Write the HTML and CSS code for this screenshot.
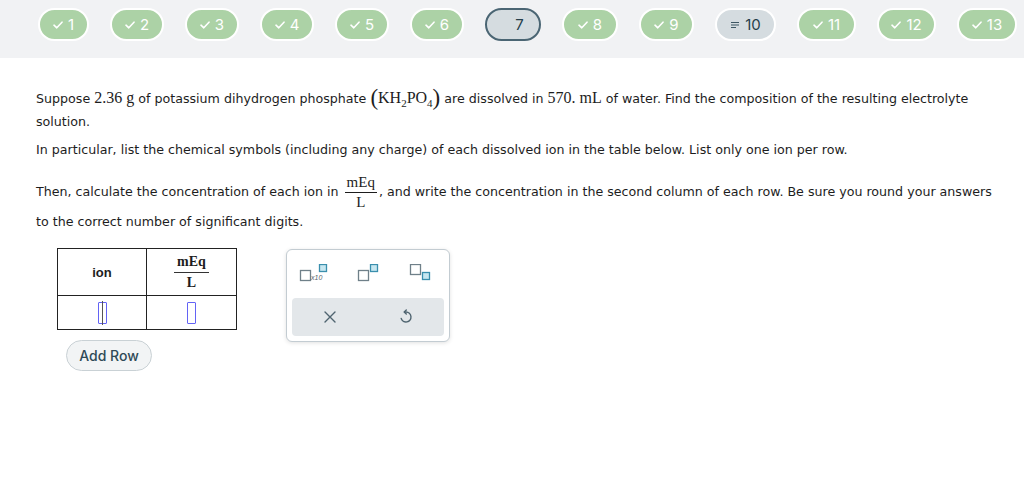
FILE: index.html
```html
<!DOCTYPE html>
<html lang="en">
<head>
<meta charset="utf-8">
<title>Question 7</title>
<link rel="stylesheet" href="styles.css">
</head>
<body>
<nav class="nav">
  <div class="pill done w1"><svg class="chk" viewBox="0 0 10 8"><path d="M1 4.2 L3.8 6.8 L9 1.2"/></svg><span>1</span></div>
  <div class="pill done w2"><svg class="chk" viewBox="0 0 10 8"><path d="M1 4.2 L3.8 6.8 L9 1.2"/></svg><span>2</span></div>
  <div class="pill done w2"><svg class="chk" viewBox="0 0 10 8"><path d="M1 4.2 L3.8 6.8 L9 1.2"/></svg><span>3</span></div>
  <div class="pill done w2"><svg class="chk" viewBox="0 0 10 8"><path d="M1 4.2 L3.8 6.8 L9 1.2"/></svg><span>4</span></div>
  <div class="pill done w2"><svg class="chk" viewBox="0 0 10 8"><path d="M1 4.2 L3.8 6.8 L9 1.2"/></svg><span>5</span></div>
  <div class="pill done w2"><svg class="chk" viewBox="0 0 10 8"><path d="M1 4.2 L3.8 6.8 L9 1.2"/></svg><span>6</span></div>
  <div class="pill current w7"><span class="ph"></span><span>7</span></div>
  <div class="pill done w8"><svg class="chk" viewBox="0 0 10 8"><path d="M1 4.2 L3.8 6.8 L9 1.2"/></svg><span>8</span></div>
  <div class="pill done w9"><svg class="chk" viewBox="0 0 10 8"><path d="M1 4.2 L3.8 6.8 L9 1.2"/></svg><span>9</span></div>
  <div class="pill partial w10"><svg class="lines" viewBox="0 0 10 8"><path d="M1 1.5 H9 M1 4 H9 M1 6.5 H6"/></svg><span>10</span></div>
  <div class="pill done w11"><svg class="chk" viewBox="0 0 10 8"><path d="M1 4.2 L3.8 6.8 L9 1.2"/></svg><span>11</span></div>
  <div class="pill done w12"><svg class="chk" viewBox="0 0 10 8"><path d="M1 4.2 L3.8 6.8 L9 1.2"/></svg><span>12</span></div>
  <div class="pill done w13"><svg class="chk" viewBox="0 0 10 8"><path d="M1 4.2 L3.8 6.8 L9 1.2"/></svg><span>13</span></div>
</nav>

<main class="content">
  <p class="q q1">Suppose <span class="m">2.36</span> <span class="m">g</span> of potassium dihydrogen phosphate <span class="m formula"><span class="paren">(</span>KH<sub>2</sub>PO<sub>4</sub><span class="paren">)</span></span> are dissolved in <span class="m">570.</span> <span class="m">mL</span> of water. Find the composition of the resulting electrolyte solution.</p>
  <p class="q q2">In particular, list the chemical symbols (including any charge) of each dissolved ion in the table below. List only one ion per row.</p>
  <p class="q q3">Then, calculate the concentration of each ion in <span class="frac"><span class="num">mEq</span><span class="den">L</span></span>, and write the concentration in the second column of each row. Be sure you round your answers to the correct number of significant digits.</p>

  <div class="work">
    <div class="left">
      <table class="ions">
        <tr class="head">
          <th class="c1">ion</th>
          <th class="c2"><span class="frac bold"><span class="num">mEq</span><span class="den">L</span></span></th>
        </tr>
        <tr class="row">
          <td><span class="box cursor"></span></td>
          <td><span class="box"></span></td>
        </tr>
      </table>
      <button class="addrow">Add Row</button>
    </div>

    <div class="palette">
      <div class="tools">
        <span class="tool">
          <svg width="30" height="20" viewBox="0 0 30 20">
            <rect x="1.5" y="6.5" width="10" height="10" class="big"/>
            <text x="12" y="16" class="x10">x10</text>
            <rect x="20.5" y="0.5" width="7" height="7" class="small"/>
          </svg>
        </span>
        <span class="tool">
          <svg width="26" height="20" viewBox="0 0 26 20">
            <rect x="2.5" y="6.5" width="10" height="10" class="big"/>
            <rect x="14.5" y="0.5" width="7" height="7" class="small"/>
          </svg>
        </span>
        <span class="tool">
          <svg width="26" height="20" viewBox="0 0 26 20">
            <rect x="2.5" y="0.5" width="10" height="10" class="big"/>
            <rect x="14.5" y="8.5" width="7" height="7" class="small"/>
          </svg>
        </span>
      </div>
      <div class="actions">
        <span class="act">
          <svg width="14" height="14" viewBox="0 0 14 14"><path d="M2 2 L12 12 M12 2 L2 12"/></svg>
        </span>
        <span class="act">
          <svg width="16" height="16" viewBox="0 0 16 16"><path d="M6.5 3 H8 A5 5 0 1 1 3.2 9.5"/><path d="M8.3 1 L6.2 3 L8.3 5"/></svg>
        </span>
      </div>
    </div>
  </div>
</main>
</body>
</html>
```

FILE: styles.css
```css
html, body {
  margin: 0;
  padding: 0;
  background: #ffffff;
}

body {
  font-family: "DejaVu Sans", Verdana, sans-serif;
  font-size: 12.65px;
  color: #1d1d1d;
}

/* ---------- top question navigation ---------- */
.nav {
  height: 58px;
  box-sizing: border-box;
  background: #f1f2f4;
  display: flex;
  align-items: flex-start;
  gap: 21px;
  padding: 8px 0 0 38px;
}

.pill {
  height: 33px;
  box-sizing: border-box;
  border: 2px solid #ffffff;
  border-radius: 17px;
  display: flex;
  align-items: center;
  justify-content: center;
  gap: 5px;
  font-family: Inter, "Open Sans", sans-serif;
  font-size: 15px;
  line-height: 1;
}

.w1 { width: 51px; }
.w2 { width: 54px; }
.w7 { width: 56px; }
.w8 { width: 56px; }
.w9 { width: 55px; }
.w10 { width: 61px; }
.w11 { width: 59px; }
.w12 { width: 59px; }
.w13 { width: 60px; }

.pill.done {
  background: #acd2a6;
  color: #ffffff;
}

.pill.current {
  background: #d5dce0;
  border-color: #4a6573;
  color: #263f4b;
}

.pill.partial {
  background: #d5dce0;
  color: #263f4b;
}

.chk {
  width: 10px;
  height: 8px;
  fill: none;
  stroke: #ffffff;
  stroke-width: 1.6;
  stroke-linecap: round;
  stroke-linejoin: round;
}

.lines {
  width: 10px;
  height: 8px;
  fill: none;
  stroke: #3d5663;
  stroke-width: 1.2;
}

.ph {
  width: 8px;
}

/* ---------- question text ---------- */
.content {
  padding: 0 30px 0 36px;
}

.q {
  margin: 0;
  line-height: 23px;
}

.q1 {
  padding-top: 28px;
}

.q2 {
  margin-top: 5px;
}

.q3 {
  margin-top: 14px;
  line-height: 23px;
}

.m {
  font-family: "Liberation Serif", "Times New Roman", serif;
  font-size: 16px;
}

.formula sub {
  font-size: 11px;
  vertical-align: -4px;
  line-height: 0;
}

.paren {
  font-size: 23px;
  font-weight: 300;
  vertical-align: -2px;
  line-height: 0;
}

.frac {
  display: inline-flex;
  flex-direction: column;
  align-items: center;
  vertical-align: middle;
  font-family: "Liberation Serif", "Times New Roman", serif;
  font-size: 15px;
  line-height: 15px;
  margin: 0 2px;
}

.frac .num {
  padding: 0 2px 2px;
  border-bottom: 1px solid #1d1d1d;
}

.frac .den {
  padding-top: 2px;
}

/* ---------- answer area ---------- */
.work {
  display: flex;
  align-items: flex-start;
  margin-top: 15px;
}

.left {
  margin-left: 21px;
  display: flex;
  flex-direction: column;
  align-items: flex-start;
}

.ions {
  border-collapse: collapse;
  border: 1px solid #222;
}

.ions th, .ions td {
  border: 1px solid #222;
  padding: 0;
  text-align: center;
}

.ions .c1 {
  width: 88px;
  height: 46px;
  font-family: "Liberation Sans", Arial, sans-serif;
  font-size: 13px;
  font-weight: bold;
}

.ions .c2 {
  width: 89px;
}

.frac.bold {
  font-weight: bold;
  font-size: 14px;
  line-height: 16px;
}

.frac.bold .num {
  border-bottom: 1.5px solid #333;
  padding: 0 3px 2px;
}

.ions .row td {
  height: 33px;
}

.box {
  display: inline-block;
  width: 7px;
  height: 20px;
  border: 1px solid #6363f5;
  border-radius: 1px;
  vertical-align: middle;
  position: relative;
}

.box.cursor::after {
  content: "";
  position: absolute;
  left: 3px;
  top: -2px;
  width: 1px;
  height: 24px;
  background: #555;
}

.addrow {
  margin: 10px 0 0 9px;
  width: 86px;
  height: 31px;
  border: 1px solid #c9d1d5;
  border-radius: 16px;
  background: #f2f4f5;
  color: #2f4a57;
  font-family: Inter, "Open Sans", sans-serif;
  font-size: 14px;
  font-weight: 500;
  padding: 0;
}

/* ---------- tool palette ---------- */
.palette {
  margin-left: 49px;
  margin-top: 1px;
  width: 164px;
  box-sizing: border-box;
  border: 1px solid #c3ccd2;
  border-radius: 6px;
  background: #fff;
  box-shadow: 0 1px 4px rgba(0, 0, 0, 0.12);
  padding: 0 5px 5px;
}

.tools {
  height: 48px;
  display: flex;
  align-items: center;
  justify-content: space-between;
  padding: 0 10px 0 7px;
}

.tool {
  display: flex;
}

.tool .big {
  fill: #fff;
  stroke: #6f8089;
  stroke-width: 1.3;
}

.tool .small {
  fill: #c7e7f0;
  stroke: #3a8fad;
  stroke-width: 1.3;
}

.tool .x10 {
  font-family: "Liberation Sans", Arial, sans-serif;
  font-size: 7px;
  font-style: italic;
  fill: #55656e;
}

.actions {
  height: 38px;
  border-radius: 4px;
  background: #e3e7ea;
  display: flex;
  align-items: center;
  justify-content: space-around;
}

.act {
  display: flex;
}

.act svg {
  fill: none;
  stroke: #4f6470;
  stroke-width: 1.4;
  stroke-linecap: round;
  stroke-linejoin: round;
}
```
